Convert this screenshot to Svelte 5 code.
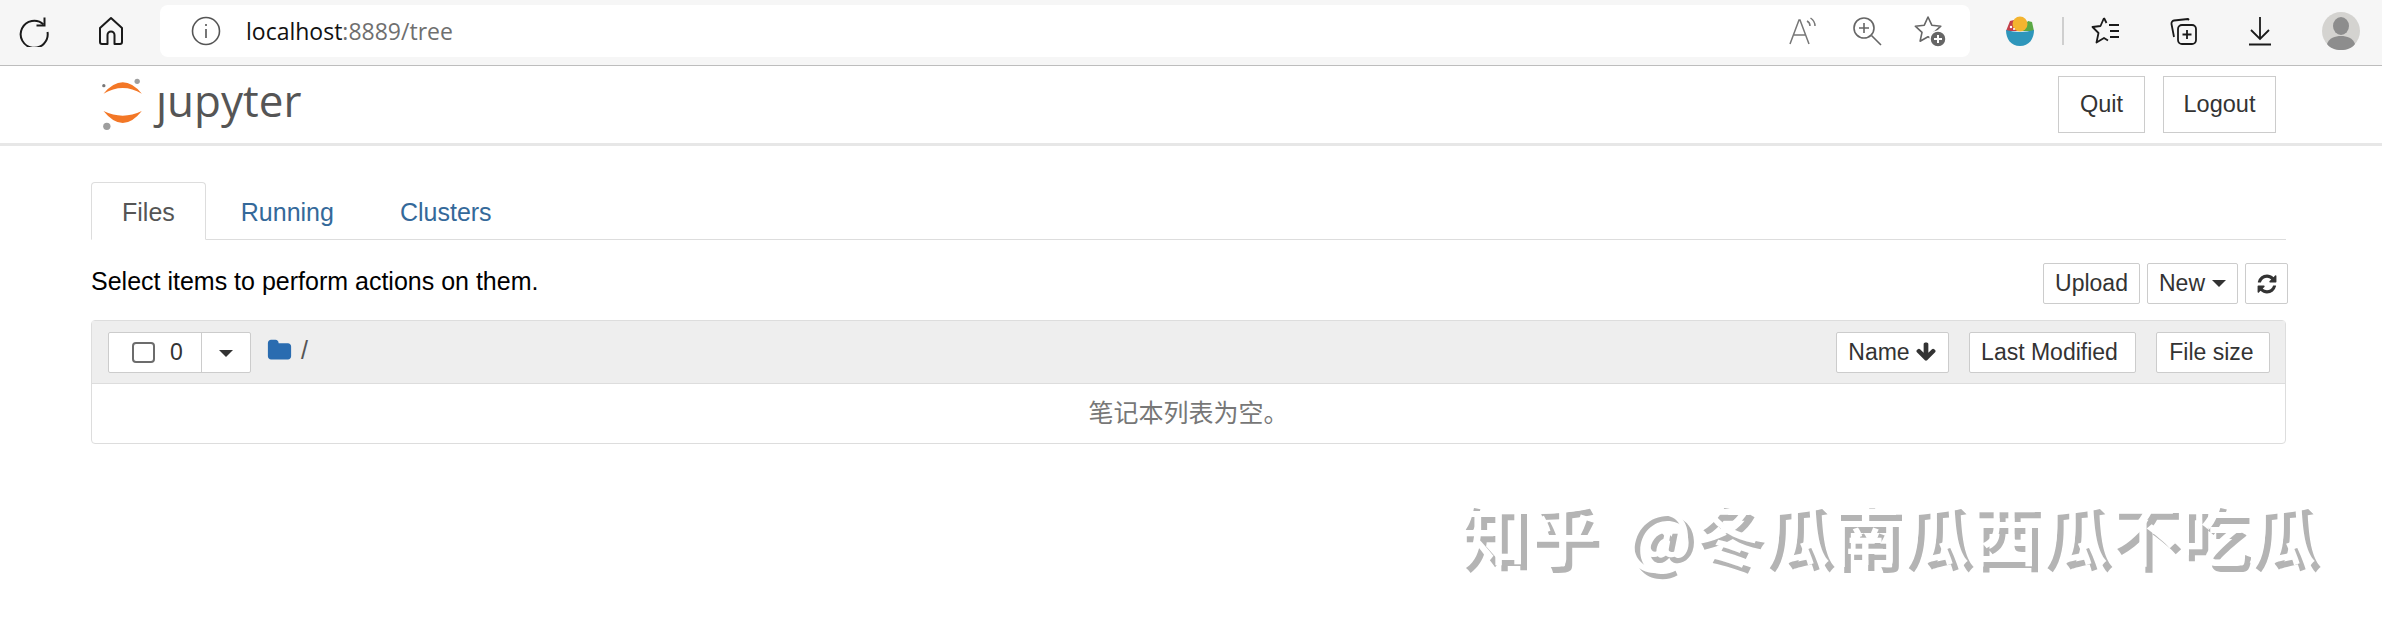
<script>
  const tabs = ["Files", "Running", "Clusters"]
</script>

<div class="page">
  <div class="browser-bar">
    <svg class="reload" viewBox="0 0 32 32" width="32" height="32" fill="none" stroke="#1a1a1a" stroke-width="2">
      <path d="M25.500 9.500A13.500 13.500 0 1 0 29.500 17" />
      <path d="M26.500 2.500v8h-8" />
    </svg>
    <svg class="home" viewBox="0 0 32 32" width="32" height="32" fill="none" stroke="#1a1a1a" stroke-width="2" stroke-linejoin="round">
      <path d="M16 3 5 13v14a2 2 0 0 0 2 2h5.500v-9a3.500 3.500 0 0 1 7 0v9H25a2 2 0 0 0 2-2V13z" />
    </svg>
    <div class="address">
      <svg class="info" viewBox="0 0 32 32" width="32" height="32" fill="none" stroke="#555" stroke-width="1.600">
        <circle cx="16" cy="16" r="13.500" />
        <path d="M16 14v9M16 9v2" />
      </svg>
      <span class="url">localhost<span class="url-dim">:8889/tree</span></span>
      <div class="address-icons">
        <svg viewBox="0 0 32 32" width="32" height="32" fill="none" stroke="#777" stroke-width="1.500">
          <path d="M2 29 11 5h1l9 24M5.500 20h12.500" />
          <path d="M19 6c2 1 3 3 3 5M22.500 3c3 2 4.500 5 4.500 8" />
        </svg>
        <svg viewBox="0 0 32 32" width="32" height="32" fill="none" stroke="#666" stroke-width="1.600">
          <circle cx="13" cy="13" r="10" />
          <path d="M20.500 20.500 30 30M13 8v10M8 13h10" />
        </svg>
        <svg viewBox="0 0 32 32" width="32" height="32" fill="none" stroke="#666" stroke-width="1.600" stroke-linejoin="round">
          <path d="M14 2l3.800 8.200 9 1-6.700 6.200 1.900 8.800-8-4.400-7.900 4.400 1.900-8.800-6.700-6.200 9-1z" />
          <circle cx="24" cy="24" r="8" fill="#666" stroke="#fff" stroke-width="1.500" />
          <path d="M24 20v8M20 24h8" stroke="#fff" stroke-width="2" />
        </svg>
      </div>
    </div>
    <svg class="bowl" viewBox="0 0 28 30" width="28" height="30">
      <path d="M0 15 4 5l4-1 6 8v3z" fill="#c4404a" />
      <path d="M28 15 26 6l-4-1-6 8v2z" fill="#5aa845" />
      <circle cx="14" cy="8" r="7.500" fill="#f4b42f" />
      <circle cx="5" cy="11" r="1.200" fill="#fff" />
      <circle cx="8" cy="13" r="1" fill="#fff" />
      <path d="M0 14q14 4 28 0c0 9-5 16-14 16S0 23 0 14z" fill="#2e96bb" />
    </svg>
    <div class="bar-divider"></div>
    <svg class="fav" viewBox="0 0 32 32" width="32" height="32" fill="none" stroke="#1a1a1a" stroke-width="1.800" stroke-linejoin="round">
      <path d="M14 3 10.500 11l-8 1 6 6-2 9.500L14 23l4 2.500M14 3l2.500 5" />
      <path d="M19 10h10M20 16h9M20 22h9" />
    </svg>
    <svg class="collect" viewBox="0 0 32 32" width="32" height="32" fill="none" stroke="#1a1a1a" stroke-width="1.800" stroke-linejoin="round">
      <path d="M22 5l-1-1-14 1.500a3 3 0 0 0-2.500 3.500L7 22" />
      <rect x="11" y="10" width="18" height="19" rx="4" />
      <path d="M20 15v9M15.500 19.500h9" />
    </svg>
    <svg class="download" viewBox="0 0 32 32" width="32" height="32" fill="none" stroke="#1a1a1a" stroke-width="1.800">
      <path d="M16 2v22M7 15l9 9 9-9M5 29.500h22" />
    </svg>
    <svg class="avatar" viewBox="0 0 38 38" width="38" height="38">
      <circle cx="19" cy="19" r="19" fill="#d4d3d0" />
      <ellipse cx="19" cy="14" rx="8" ry="9" fill="#8d8d8d" />
      <path d="M5 32c2-6 8-8 14-8s12 2 14 8c-3 4-8 6-14 6S8 36 5 32z" fill="#8d8d8d" />
    </svg>
  </div>

  <header class="header">
    <div class="logo">
      <svg viewBox="60 50 140 165" width="47" height="55">
        <path d="M70 100Q128 32 185 100 128 66 70 100z" fill="#f37726" />
        <path d="M70 152Q128 224 185 152 128 180 70 152z" fill="#f37726" />
        <circle cx="71" cy="76" r="5" fill="#767677" />
        <circle cx="171" cy="63" r="8" fill="#9e9e9e" />
        <circle cx="80" cy="198" r="11" fill="#9e9e9e" />
      </svg>
      <span class="logo-text">ȷupyter</span>
    </div>
    <div class="header-buttons">
      <button class="btn quit">Quit</button>
      <button class="btn logout">Logout</button>
    </div>
  </header>

  <main class="main">
    <ul class="tabs">
      {#each tabs as tab, i}
        <li class="tab" class:active={i === 0}>{tab}</li>
      {/each}
    </ul>

    <div class="action-row">
      <span class="hint">Select items to perform actions on them.</span>
      <div class="actions">
        <button class="btn small upload">Upload</button>
        <button class="btn small new">New <i class="caret"></i></button>
        <button class="btn small refresh" aria-label="refresh">
          <svg viewBox="0 0 1792 1792" width="22" height="22" fill="#333">
            <path d="M1639 1056q0 5-1 7-64 268-268 434.500t-478 166.500q-146 0-282.500-55t-243.500-157l-129 129q-19 19-45 19t-45-19-19-45v-448q0-26 19-45t45-19h448q26 0 45 19t19 45-19 45l-137 137q71 66 161 102t187 36q134 0 250-65t186-179q11-17 53-117 8-23 30-23h192q13 0 22.500 9.500t9.500 22.500zm25-800v448q0 26-19 45t-45 19h-448q-26 0-45-19t-19-45 19-45l138-138q-148-137-349-137-134 0-250 65t-186 179q-11 17-53 117-8 23-30 23h-199q-13 0-22.500-9.500t-9.500-22.500v-7q65-268 270-434.500t480-166.500q146 0 284 55.500t245 156.500l130-129q19-19 45-19t45 19 19 45z" />
          </svg>
        </button>
      </div>
    </div>

    <div class="list">
      <div class="list-head">
        <div class="select-group">
          <div class="select-box">
            <span class="checkbox"></span>
            <span>0</span>
          </div>
          <div class="select-drop"><i class="caret"></i></div>
        </div>
        <svg class="folder" viewBox="0 0 1792 1792" width="25" height="25" fill="#2a6cb0">
          <path d="M1728 608v704q0 92-66 158t-158 66h-1216q-92 0-158-66t-66-158v-960q0-92 66-158t158-66h320q92 0 158 66t66 158v32h672q92 0 158 66t66 158z" />
        </svg>
        <span class="slash">/</span>
        <div class="sort-buttons">
          <button class="btn small name">Name
            <svg viewBox="0 0 1792 1792" width="22" height="22" fill="#333">
              <path d="M1675 832q0 53-37 90l-651 652q-39 37-91 37-53 0-90-37l-651-652q-38-36-38-90 0-53 38-91l74-75q39-37 91-37 53 0 90 37l294 294v-704q0-52 38-90t90-38h128q52 0 90 38t38 90v704l294-294q37-37 90-37 52 0 91 37l75 75q37 39 37 91z" />
            </svg>
          </button>
          <button class="btn small modified">Last Modified</button>
          <button class="btn small size">File size</button>
        </div>
      </div>
      <div class="list-empty">笔记本列表为空。</div>
    </div>
  </main>

  <div class="watermark">知乎 @冬瓜南瓜西瓜不吃瓜</div>
</div>

<style>
  :global(body) {
    margin: 0;
    background: #fff;
  }

  .page {
    position: relative;
    height: 638px;
    overflow: hidden;
    font-family: "Liberation Sans", Arial, sans-serif;
    font-size: 25px;
    color: #000;
  }

  .browser-bar {
    display: flex;
    align-items: center;
    height: 66px;
    box-sizing: border-box;
    padding: 0 0 4px 18px;
    background: #f6f6f6;
    border-bottom: 1px solid #bdbdbd;
  }

  .home {
    margin-left: 45px;
  }

  .address {
    display: flex;
    align-items: center;
    width: 1810px;
    height: 52px;
    margin-left: 33px;
    background: #fff;
    border-radius: 8px;
  }

  .info {
    margin-left: 30px;
  }

  .url {
    margin-left: 24px;
    font-family: "Open Sans", sans-serif;
    font-size: 23px;
    color: #111;
  }

  .url-dim {
    color: #6f6f6f;
  }

  .address-icons {
    display: flex;
    gap: 31px;
    margin-left: auto;
    margin-right: 24px;
  }

  .bowl {
    margin-left: 36px;
  }

  .bar-divider {
    width: 2px;
    height: 28px;
    margin-left: 28px;
    background: #cfcfcf;
  }

  .fav {
    margin-left: 26px;
  }

  .collect {
    margin-left: 45px;
  }

  .download {
    margin-left: 45px;
  }

  .avatar {
    margin-left: 46px;
  }

  .header {
    display: flex;
    align-items: center;
    justify-content: space-between;
    height: 80px;
    box-sizing: border-box;
    padding: 0 106px 0 100px;
    border-bottom: 3px solid #e7e7e7;
  }

  .logo {
    display: flex;
    align-items: center;
    gap: 9px;
    margin-top: -1px;
  }

  .logo-text {
    font-family: "Open Sans", sans-serif;
    font-size: 44px;
    line-height: 1;
    color: #555;
    margin-top: -8px;
  }

  .header-buttons {
    display: flex;
    gap: 18px;
  }

  .btn {
    display: inline-flex;
    align-items: center;
    justify-content: center;
    box-sizing: border-box;
    padding: 0;
    background: #fff;
    border: 1px solid #ccc;
    color: #333;
    font: inherit;
    font-size: 23.500px;
  }

  .quit {
    width: 87px;
    height: 57px;
  }

  .logout {
    width: 113px;
    height: 57px;
  }

  .small {
    height: 41px;
    border-radius: 2px;
    font-size: 23px;
  }

  .main {
    padding: 36px 96px 0 91px;
  }

  .tabs {
    display: flex;
    gap: 4px;
    height: 57px;
    margin: 0;
    padding: 0;
    list-style: none;
    border-bottom: 1px solid #ddd;
  }

  .tab {
    height: 57px;
    box-sizing: border-box;
    padding: 15px 30px 0;
    border: 1px solid transparent;
    color: #34699a;
  }

  .tab.active {
    height: 58px;
    background: #fff;
    color: #555;
    border-color: #ddd #ddd #fff;
    border-radius: 4px 4px 0 0;
  }

  .action-row {
    display: flex;
    align-items: center;
    justify-content: space-between;
    margin-top: 23px;
    height: 41px;
  }

  .hint {
    margin-top: -5px;
  }

  .actions {
    display: flex;
    gap: 7px;
    margin-right: -2px;
  }

  .upload {
    width: 97px;
  }

  .new {
    width: 91px;
    gap: 7px;
  }

  .refresh {
    width: 43px;
  }

  .caret {
    display: inline-block;
    width: 0;
    height: 0;
    border-top: 7px solid #333;
    border-left: 7px solid transparent;
    border-right: 7px solid transparent;
  }

  .list {
    margin-top: 16px;
    border: 1px solid #ddd;
    border-radius: 4px;
  }

  .list-head {
    display: flex;
    align-items: center;
    height: 62px;
    padding: 0 15px 0 16px;
    background: #eee;
    border-bottom: 1px solid #ddd;
  }

  .select-group {
    display: flex;
    height: 41px;
    box-sizing: border-box;
    background: #fff;
    border: 1px solid #ccc;
    border-radius: 2px;
    color: #333;
    font-size: 23px;
  }

  .select-box {
    display: flex;
    align-items: center;
    gap: 15px;
    width: 93px;
    box-sizing: border-box;
    padding-left: 23px;
    border-right: 1px solid #ccc;
  }

  .checkbox {
    width: 23px;
    height: 21px;
    box-sizing: border-box;
    border: 2px solid #6c6c6c;
    border-radius: 4px;
  }

  .select-drop {
    display: flex;
    align-items: center;
    justify-content: center;
    width: 48px;
    padding-top: 3px;
  }

  .folder {
    margin-left: 16px;
    margin-top: -3px;
  }

  .slash {
    margin-left: 9px;
    margin-top: -3px;
    color: #555;
  }

  .sort-buttons {
    display: flex;
    gap: 20px;
    margin-left: auto;
  }

  .name {
    width: 113px;
    gap: 5px;
  }

  .modified {
    width: 167px;
    padding-right: 6px;
  }

  .size {
    width: 114px;
    padding-right: 3px;
  }

  .list-empty {
    height: 59px;
    line-height: 59px;
    text-align: center;
    color: #777;
    font-family: "Liberation Sans", "Noto Sans CJK SC", sans-serif;
    font-size: 25px;
  }

  .watermark {
    position: absolute;
    left: 1458px;
    top: 487px;
    font-family: "Noto Sans CJK SC", sans-serif;
    font-size: 69px;
    line-height: 88px;
    font-weight: 500;
    letter-spacing: 0.400px;
    word-spacing: 12px;
    white-space: nowrap;
    color: #fff;
    text-shadow: 6px 6px 0 #b4b4b4;
  }
</style>
